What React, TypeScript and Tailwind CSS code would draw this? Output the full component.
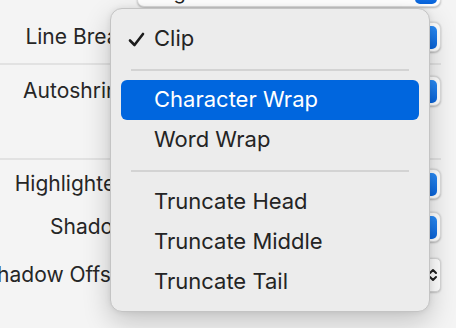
import React from 'react';

const font = "font-['Inter','Liberation_Sans',sans-serif]";

function Chevrons({ light }: { light?: boolean }) {
  return (
    <svg width="10" height="16" viewBox="0 0 10 16" fill="none" stroke={light ? '#ffffff' : '#222'} strokeWidth="2" strokeLinecap="round" strokeLinejoin="round">
      <path d="M2 6 L5 3 L8 6" />
      <path d="M2 10 L5 13 L8 10" />
    </svg>
  );
}

function Popup({ text, className = '' }: { text: string; className?: string }) {
  return (
    <div className={`flex-1 h-[30px] flex items-center justify-between rounded-[7px] bg-white shadow-[0_0.5px_2px_rgba(0,0,0,0.25)] border border-[#dcdcdc] pl-3 pr-[3px] ${className}`}>
      <span className="text-[20px] text-[#222]">{text}</span>
      <span className="w-[22px] h-[23px] rounded-[5px] bg-gradient-to-b from-[#2b8df8] to-[#0864dc] flex items-center justify-center">
        <Chevrons light />
      </span>
    </div>
  );
}

function Row({ label, children, className = '', labelW = 'w-[130px]' }: { label: string; children: React.ReactNode; className?: string; labelW?: string }) {
  return (
    <div className={`flex items-center h-[40px] ${className}`}>
      <div className={`${labelW} shrink-0 flex justify-end text-[21px] text-[#262626] whitespace-nowrap`}>
        <span>{label}</span>
      </div>
      <div className="ml-[8px] flex-1 flex items-center">{children}</div>
    </div>
  );
}

function MenuItem({ label, checked, active }: { label: string; checked?: boolean; active?: boolean }) {
  return (
    <div className={`h-[40px] mx-[10px] flex items-center rounded-[6px] ${active ? 'bg-[#0066de] text-white' : 'text-[#242424]'}`}>
      <span className="w-[33px] shrink-0 flex items-center pl-[7px]">
        {checked && (
          <svg width="17" height="15" viewBox="0 0 17 15" fill="none" stroke="#1c1c1c" strokeWidth="2.6" strokeLinecap="round" strokeLinejoin="round">
            <path d="M2 8.5 L6.5 13 L15 2" />
          </svg>
        )}
      </span>
      <span className="text-[22px] leading-none -mt-[2px]">{label}</span>
    </div>
  );
}

function Separator({ h = 'h-[21px]' }: { h?: string }) {
  return (
    <div className={`${h} flex items-center px-[20px]`}>
      <div className="h-[2px] w-full bg-[#d3d3d3]" />
    </div>
  );
}

export default function App() {
  return (
    <div className={`relative w-[456px] h-[328px] overflow-hidden bg-[#f4f4f4] ${font}`}>
      <div className="flex flex-col w-[441px]">
        <div className="-mt-[23px] ml-[137px] flex">
          <Popup text="Align Baselines" />
        </div>
        <Row label="Line Break" className="mt-[10px]">
          <Popup text="Clip" />
        </Row>
        <div className="mt-[6px] h-[2px] bg-[#e2e2e2]" />
        <Row label="Autoshrink" className="mt-[6px]">
          <Popup text="Fixed Font Size" />
        </Row>
        <div className="h-[47px]" />
        <div className="h-[2px] bg-[#e2e2e2]" />
        <Row label="Highlighted" className="mt-[4px]" labelW="w-[128px]">
          <Popup text="Default" />
        </Row>
        <Row label="Shadow" className="mt-[3px]">
          <Popup text="Default" />
        </Row>
        <Row label="Shadow Offset" className="mt-[8px]">
          <div className="flex-1" />
          <div className="w-[17px] h-[34px] rounded-[5px] bg-white border border-[#d8d8d8] flex items-center justify-center shadow-[0_0.5px_2px_rgba(0,0,0,0.2)]">
            <Chevrons />
          </div>
        </Row>
        <div className="ml-[334px] -mt-[2px] text-[15px] text-[#262626] leading-none">Height</div>
      </div>

      <div className="absolute left-[110px] top-[8px] w-[320px] h-[304px] rounded-[12px] bg-[#ececec] border border-[#c4c4c4] shadow-[0_10px_28px_rgba(0,0,0,0.2),0_0_6px_rgba(0,0,0,0.08)] pt-[10px]">
        <MenuItem label="Clip" checked />
        <Separator />
        <MenuItem label="Character Wrap" active />
        <MenuItem label="Word Wrap" />
        <Separator h="h-[22px]" />
        <MenuItem label="Truncate Head" />
        <MenuItem label="Truncate Middle" />
        <MenuItem label="Truncate Tail" />
      </div>
    </div>
  );
}
